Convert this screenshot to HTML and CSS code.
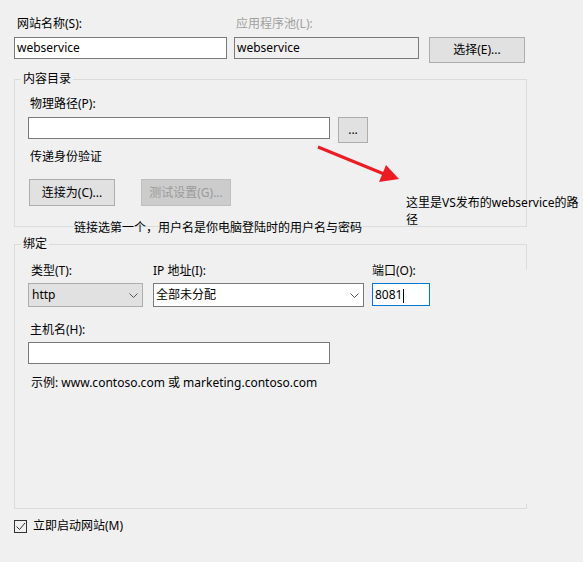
FILE: index.html
```html
<!DOCTYPE html>
<html lang="zh-CN">
<head>
    <meta charset="UTF-8">
    <title>添加网站</title>
    <link rel="stylesheet" href="styles.css">
</head>
<body>
    <div class="dialog">
        <div class="site-row">
            <div class="col name-col">
                <div class="lbl">网站名称(S):</div>
                <div class="field">webservice</div>
            </div>
            <div class="col pool-col">
                <div class="lbl muted">应用程序池(L):</div>
                <div class="field readonly">webservice</div>
            </div>
            <button class="btn pick-btn">选择(E)...</button>
        </div>

        <fieldset class="group content-group">
            <legend>内容目录</legend>
            <div class="group-body content-body">
                <div class="lbl">物理路径(P):</div>
                <div class="path-row">
                    <div class="field path-field"></div>
                    <button class="btn dots-btn">...</button>
                </div>
                <div class="lbl pass-lbl">传递身份验证</div>
                <div class="btn-row">
                    <button class="btn connect-btn">连接为(C)...</button>
                    <button class="btn test-btn" disabled>测试设置(G)...</button>
                </div>
            </div>
        </fieldset>

        <fieldset class="group binding-group">
            <legend>绑定</legend>
            <div class="group-body binding-body">
                <div class="bind-row">
                    <div class="col type-col">
                        <div class="lbl">类型(T):</div>
                        <div class="select gray">
                            <span>http</span>
                            <svg class="chev" width="9" height="5" viewBox="0 0 9 5"><polyline points="0.5,0.5 4.5,4.5 8.5,0.5" fill="none" stroke="#555" stroke-width="1"/></svg>
                        </div>
                    </div>
                    <div class="col ip-col">
                        <div class="lbl flush">IP 地址(I):</div>
                        <div class="select">
                            <span>全部未分配</span>
                            <svg class="chev" width="9" height="5" viewBox="0 0 9 5"><polyline points="0.5,0.5 4.5,4.5 8.5,0.5" fill="none" stroke="#555" stroke-width="1"/></svg>
                        </div>
                    </div>
                    <div class="col port-col">
                        <div class="lbl flush">端口(O):</div>
                        <div class="field focus">8081<span class="caret"></span></div>
                    </div>
                </div>
                <div class="lbl host-lbl">主机名(H):</div>
                <div class="field host-field"></div>
                <div class="lbl example">示例: www.contoso.com 或 marketing.contoso.com</div>
            </div>
        </fieldset>

        <div class="check-row">
            <span class="checkbox">
                <svg width="11" height="11" viewBox="0 0 11 11"><polyline points="1.5,5.5 4.5,8.5 10,2" fill="none" stroke="#333" stroke-width="1"/></svg>
            </span>
            <span>立即启动网站(M)</span>
        </div>
    </div>

    <!-- 截图上的标注 -->
    <div class="note note-auth">链接选第一个，用户名是你电脑登陆时的用户名与密码</div>
    <svg class="arrow" width="100" height="50" viewBox="0 0 100 50">
        <line x1="8" y1="7" x2="74" y2="34" stroke="#ec1c24" stroke-width="3"/>
        <polygon points="69,42 76,25 89,39" fill="#ec1c24"/>
    </svg>
    <div class="note note-path">这里是VS发布的webservice的路<br>径</div>
</body>
</html>
```

FILE: styles.css
```css
*{
    margin:0;
    padding:0;
    box-sizing:border-box;
}
body{
    background-color:#f0f0f0;
    font-family:"Noto Sans","Noto Sans CJK SC",sans-serif;
    font-size:12px;
    line-height:16px;
    color:#000;
    width:583px;
    height:562px;
    overflow:hidden;
    position:relative;
}
.dialog{
    padding:16px 0 0 14px;
}
.lbl{
    height:16px;
    line-height:16px;
    padding-left:3px;
    margin-bottom:5px;
    white-space:nowrap;
}
.lbl.muted{
    color:#a0a0a0;
    padding-left:2px;
}
.lbl.flush{
    padding-left:0;
}
.field{
    height:22px;
    line-height:20px;
    border:1px solid #7a7a7a;
    background-color:#fff;
    padding:0 2px;
    white-space:nowrap;
}
.field.readonly{
    background-color:#f0f0f0;
}
.btn{
    font-family:inherit;
    font-size:12px;
    color:#000;
    background-color:#e1e1e1;
    border:1px solid #adadad;
    height:26px;
    line-height:24px;
    text-align:center;
}
.btn:disabled{
    background-color:#cccccc;
    border-color:#bfbfbf;
    color:#9a9a9a;
}

/* 第一行 */
.site-row{
    display:flex;
    align-items:flex-start;
}
.name-col{
    width:213px;
    margin-right:7px;
}
.pool-col{
    width:185px;
    margin-right:10px;
}
.pick-btn{
    width:96px;
    margin-top:21px;
}

/* 分组 */
.group{
    width:513px;
    border:1px solid #dcdcdc;
    min-width:0;
}
.group legend{
    margin-left:6px;
    padding:0 2px;
    line-height:16px;
    height:16px;
}
.content-group{
    margin-top:8px;
}
.group-body{
    padding-left:13px;
}
.group-body .lbl{
    padding-left:2px;
}
.content-body{
    padding-top:9px;
    padding-bottom:20px;
}
.path-row{
    display:flex;
    align-items:flex-start;
}
.path-field{
    width:302px;
}
.dots-btn{
    width:30px;
    margin-left:8px;
    line-height:18px;
}
.pass-lbl{
    margin-top:6px;
    margin-bottom:14px;
}
.btn-row{
    display:flex;
    padding-left:1px;
}
.connect-btn{
    width:86px;
    height:27px;
    margin-right:26px;
}
.test-btn{
    width:90px;
    height:27px;
}

.binding-group{
    margin-top:9px;
    position:relative;
}
/* 右边框中段在原图里缺了一截 */
.binding-group::after{
    content:"";
    position:absolute;
    right:-1px;
    top:18px;
    bottom:4px;
    width:1px;
    background-color:#f0f0f0;
}
.binding-body{
    padding-top:11px;
    padding-bottom:117px;
}
.bind-row{
    display:flex;
    align-items:flex-start;
}
.bind-row .lbl{
    margin-bottom:4px;
}
.type-col .lbl{
    padding-left:3px;
}
.bind-row .lbl.flush{
    padding-left:0;
}
.type-col{
    width:115px;
    margin-right:10px;
}
.ip-col{
    width:211px;
    margin-right:8px;
}
.port-col{
    width:58px;
}
.select{
    height:24px;
    border:1px solid #7a7a7a;
    background-color:#fff;
    display:flex;
    align-items:center;
    justify-content:space-between;
    padding:0 4px 0 2px;
}
.select.gray{
    background-color:#e1e1e1;
    border-color:#adadad;
    padding-left:3px;
}
.chev{
    display:block;
}
.field.focus{
    height:23px;
    line-height:21px;
    border-color:#0078d7;
}
.caret{
    display:inline-block;
    width:1px;
    height:14px;
    background-color:#000;
    vertical-align:middle;
    margin-left:1px;
}
.host-lbl{
    margin-top:15px;
}
.group-body .host-lbl{
    margin-bottom:4px;
}
.host-field{
    width:302px;
}
.example{
    margin-top:11px;
}
.group-body .example{
    padding-left:3px;
    margin-bottom:0;
}

/* 复选框 */
.check-row{
    margin-top:9px;
    display:flex;
    align-items:center;
    height:16px;
}
.checkbox{
    width:13px;
    height:13px;
    border:1px solid #333;
    margin-right:6px;
    display:flex;
    align-items:center;
    justify-content:center;
}
.checkbox svg{
    display:block;
}

/* 标注 */
.note{
    position:absolute;
    white-space:nowrap;
}
.note-auth{
    left:74px;
    top:220px;
}
.note-path{
    left:406px;
    top:194px;
    line-height:17px;
}
.arrow{
    position:absolute;
    left:310px;
    top:140px;
}
```
